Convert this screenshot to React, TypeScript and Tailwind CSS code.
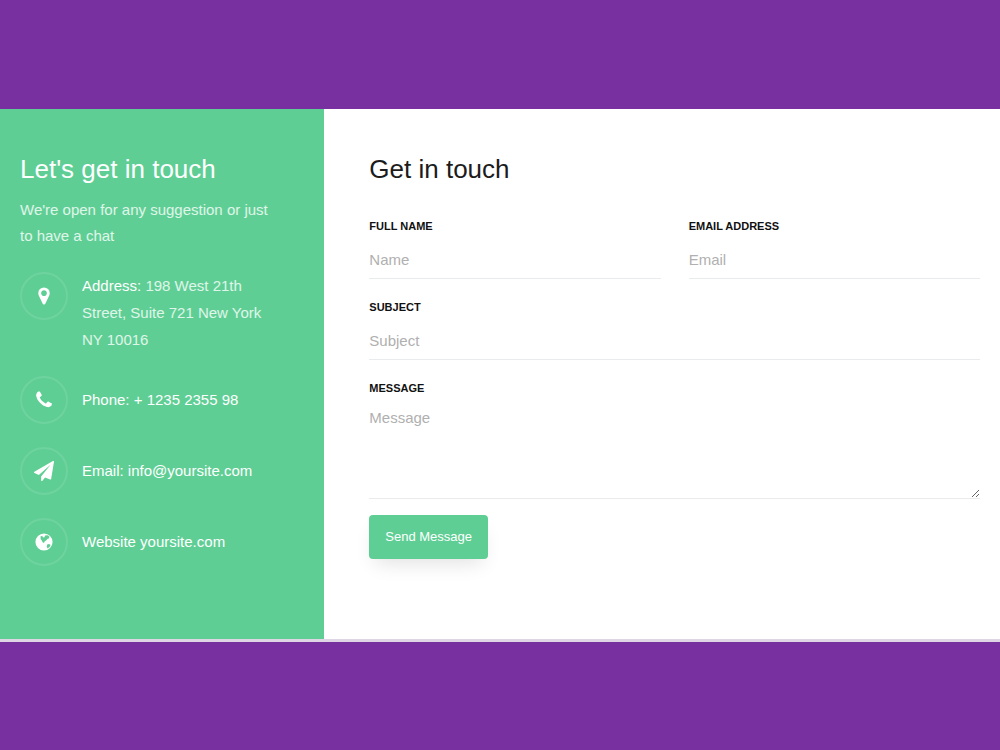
import React, { useState } from 'react';

interface InfoItem {
  label: string;
  text: string;
  href?: string;
  icon: React.ReactNode;
}

const Glyph: React.FC<{ children: React.ReactNode }> = ({ children }) => (
  <svg viewBox="0 0 1792 1792" className="w-5 h-5 fill-current" aria-hidden="true">
    {children}
  </svg>
);

const infoItems: InfoItem[] = [
  {
    label: 'Address:',
    text: '198 West 21th Street, Suite 721 New York NY 10016',
    icon: (
      <Glyph>
        <path d="M1152 640q0-106-75-181t-181-75-181 75-75 181 75 181 181 75 181-75 75-181zm256 0q0 109-33 179l-364 774q-16 33-47.5 52t-67.5 19-67.5-19-46.5-52l-365-774q-33-70-33-179 0-212 150-362t362-150 362 150 150 362z" />
      </Glyph>
    ),
  },
  {
    label: 'Phone:',
    text: '+ 1235 2355 98',
    href: 'tel:1235235598',
    icon: (
      <Glyph>
        <path d="M1600 1240q0 27-10 70.5t-21 68.5q-21 50-122 106-94 51-186 51-27 0-53-3.5t-57.5-12.5-47-14.5-55.5-20.5-49-18q-98-35-175-83-127-79-264-216t-216-264q-48-77-83-175-3-9-18-49t-20.5-55.5-14.5-47-12.5-57.5-3.5-53q0-92 51-186 56-101 106-122 25-11 68.5-21t70.5-10q14 0 21 3 18 6 53 76 11 19 30 54t35 63.5 31 53.5q3 4 17.5 25t21.5 35.5 7 28.5q0 20-28.5 50t-62 55-62 53-28.5 46q0 9 5 22.5t8.5 20.5 14 24 11.5 19q76 137 174 235t235 174q2 1 19 11.5t24 14 20.5 8.5 22.5 5q18 0 46-28.5t53-62 55-62 50-28.5q14 0 28.5 7t35.5 21.5 25 17.5q25 15 53.5 31t63.5 35 54 30q70 35 76 53 3 7 3 21z" />
      </Glyph>
    ),
  },
  {
    label: 'Email:',
    text: 'info@yoursite.com',
    href: 'mailto:info@yoursite.com',
    icon: (
      <Glyph>
        <path d="M1764 11q33 24 27 64l-256 1536q-5 29-32 45-14 8-31 8-11 0-24-5l-453-185-242 295q-18 23-49 23-13 0-22-4-19-7-30.5-23.5t-11.5-36.5v-349l864-1059-1069 925-395-162q-37-14-40-55-2-40 32-59l1664-960q15-9 32-9 20 0 36 11z" />
      </Glyph>
    ),
  },
  {
    label: 'Website',
    text: 'yoursite.com',
    href: '#',
    icon: (
      <Glyph>
        <path
          fillRule="evenodd"
          d="M896 128a768 768 0 1 0 0 1536a768 768 0 1 0 0-1536zM580 400l150-60 70 130 120 30 80-190 200-20 180 120-30 160-150 60-110 130-130 60-60 170-130-70-70-150-100-120zM1180 1120l170-40 140 90-100 170-170 130-80-150z"
        />
      </Glyph>
    ),
  },
];

const labelClass = 'block text-[11px] leading-4 font-bold uppercase text-[#111111]';
const fieldClass =
  'block w-full mt-2 border-b border-[#e9ebed] bg-transparent text-[15px] text-gray-800 placeholder:text-[#b0b0b0] outline-none focus:border-[#5ece94]';

const Field: React.FC<{
  id: string;
  label: string;
  placeholder: string;
  type?: string;
  value: string;
  onChange: (value: string) => void;
}> = ({ id, label, placeholder, type = 'text', value, onChange }) => (
  <div>
    <label htmlFor={id} className={labelClass}>{label}</label>
    <input
      id={id}
      type={type}
      placeholder={placeholder}
      value={value}
      onChange={(e) => onChange(e.target.value)}
      className={`${fieldClass} h-[37px]`}
    />
  </div>
);

export default function App() {
  const [form, setForm] = useState({ name: '', email: '', subject: '', message: '' });

  const update = (key: keyof typeof form) => (value: string) => setForm((prev) => ({ ...prev, [key]: value }));

  return (
    <div className="min-h-screen flex flex-col justify-center bg-[#7830a0] font-['Liberation_Sans',Arial,sans-serif]">
      <main className="grid grid-cols-[12fr_25fr] bg-white border-b-3 border-[#ded6e4]">
        {/* Contact info */}
        <section className="bg-[#5ece94] text-white pt-11 pb-[73px] px-5">
          <h2 className="text-[26px] leading-8">Let's get in touch</h2>
          <p className="mt-3 max-w-[260px] text-[15px] leading-[26px] text-white/80">
            We're open for any suggestion or just to have a chat
          </p>
          <ul className="mt-[23px] space-y-[23px]">
            {infoItems.map((item) => (
              <li key={item.label} className={`flex gap-[14px] ${item.href ? 'items-center' : 'items-start'}`}>
                <span className="w-12 h-12 shrink-0 flex items-center justify-center rounded-full border-2 border-white/10">
                  {item.icon}
                </span>
                <p className="max-w-[190px] text-[15px] leading-[27px] text-white/80">
                  <span className="text-white">{item.label}</span>{' '}
                  {item.href ? <a href={item.href} className="text-white">{item.text}</a> : item.text}
                </p>
              </li>
            ))}
          </ul>
        </section>

        {/* Form */}
        <section className="pt-11 pb-[73px] pl-[45px] pr-5">
          <h2 className="text-[26px] leading-8 text-[#1c1c1c]">Get in touch</h2>
          <form className="mt-[33px] space-y-5" onSubmit={(e) => e.preventDefault()}>
            <div className="grid grid-cols-2 gap-7">
              <Field id="name" label="Full name" placeholder="Name" value={form.name} onChange={update('name')} />
              <Field id="email" label="Email address" placeholder="Email" type="email" value={form.email} onChange={update('email')} />
            </div>
            <Field id="subject" label="Subject" placeholder="Subject" value={form.subject} onChange={update('subject')} />
            <div>
              <label htmlFor="message" className={labelClass}>Message</label>
              <textarea
                id="message"
                placeholder="Message"
                value={form.message}
                onChange={(e) => update('message')(e.target.value)}
                className={`${fieldClass} h-[95px] leading-[27px] resize-y`}
              />
              <button
                type="submit"
                className="mt-4 h-11 px-4 rounded-sm bg-[#5ece94] text-[13px] text-white shadow-[0_10px_20px_-6px_rgba(0,0,0,0.12)] cursor-pointer hover:bg-[#4dc286]"
              >
                Send Message
              </button>
            </div>
          </form>
        </section>
      </main>
    </div>
  );
}
